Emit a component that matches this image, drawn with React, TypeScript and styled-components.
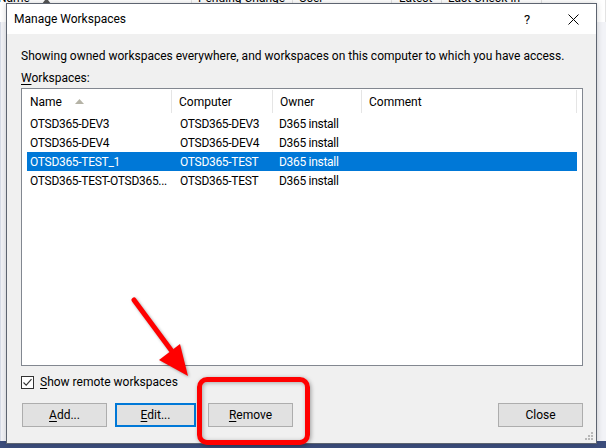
import React from "react";
import styled, { createGlobalStyle } from "styled-components";

const FONT = `Roboto, "Liberation Sans", Arial, sans-serif`;

const GlobalStyle = createGlobalStyle`
  html, body { margin: 0; padding: 0; }
  body {
    width: 606px;
    height: 448px;
    overflow: hidden;
    font-family: ${FONT};
    font-size: 12px;
    color: #000;
  }
  #root { width: 606px; height: 448px; }
`;

const Desktop = styled.div`
  position: relative;
  width: 606px;
  height: 448px;
  overflow: hidden;
  background: #f3f4f8;
`;

/* ---------- window behind the dialog ---------- */
const BackWindow = styled.div`
  width: 100%;
  height: 100%;
  display: flex;
  flex-direction: column;
`;

const BackHeader = styled.div`
  height: 22px;
  display: flex;
  background: #fff;
  overflow: hidden;
`;

const BackCell = styled.div<{ $w?: number; $pad: number }>`
  ${(p) => (p.$w ? `width: ${p.$w}px; flex: none;` : "flex: 1;")}
  box-sizing: border-box;
  padding-left: ${(p) => p.$pad}px;
  border-right: 1px solid #e3e3e3;
  display: flex;
  align-items: flex-start;
  gap: 12px;
  white-space: nowrap;
  overflow: hidden;
`;

const BackText = styled.span`
  line-height: 16px;
  margin-top: -10px;
`;

const BackSort = styled.svg`
  margin-top: -4px;
  flex: none;
`;

const BackBody = styled.div`
  flex: 1;
  background: #f2f3f7;
  border-left: 1px solid #d6dbe6;
`;

const BackFooter = styled.div`
  height: 7px;
  background: #3c4d7c;
`;

/* ---------- dialog ---------- */
const Dialog = styled.div`
  position: absolute;
  left: 6px;
  top: 3px;
  width: 591px;
  height: 441px;
  box-sizing: border-box;
  border: 1px solid #5d6470;
  background: #f0f0f0;
  display: flex;
  flex-direction: column;
  box-shadow: 0 0 6px rgba(0, 0, 0, 0.18);
`;

const TitleBar = styled.div`
  height: 30px;
  flex: none;
  background: #fff;
  display: flex;
  align-items: center;
  padding-left: 7px;
`;

const Title = styled.div`
  flex: 1;
  line-height: 16px;
`;

const CaptionButton = styled.div`
  width: 46px;
  height: 30px;
  display: flex;
  align-items: center;
  justify-content: center;
  font-size: 13px;
`;

const Body = styled.div`
  flex: 1;
  display: flex;
  flex-direction: column;
  padding: 14px 13px 16px 14px;
  min-height: 0;
`;

const Text = styled.div<{ $mt?: number }>`
  line-height: 16px;
  margin-top: ${(p) => p.$mt ?? 0}px;
  white-space: nowrap;
`;

const U = styled.span`
  text-decoration: underline;
  text-decoration-thickness: 1px;
  text-underline-offset: 2px;
`;

const ListBox = styled.div`
  margin-top: 2px;
  flex: 1;
  min-height: 0;
  border: 1px solid #828790;
  background: #fff;
  display: flex;
  flex-direction: column;
`;

const HeaderRow = styled.div`
  height: 25px;
  flex: none;
  display: grid;
  grid-template-columns: 150px 101px 89px 215px;
  align-items: center;
`;

const HeaderCell = styled.div<{ $pad: number }>`
  height: 23px;
  box-sizing: border-box;
  padding-left: ${(p) => p.$pad}px;
  border-right: 1px solid #e5e5e5;
  display: flex;
  align-items: center;
  gap: 13px;
  white-space: nowrap;
`;

const Rows = styled.div`
  display: flex;
  flex-direction: column;
  padding-left: 5px;
`;

const Row = styled.div<{ $selected?: boolean }>`
  height: 19px;
  width: 550px;
  display: grid;
  grid-template-columns: 145px 101px 89px 215px;
  align-items: center;
  background: ${(p) => (p.$selected ? "#0078d7" : "transparent")};
  color: ${(p) => (p.$selected ? "#fff" : "#000")};
`;

const Cell = styled.div<{ $pad: number }>`
  padding-left: ${(p) => p.$pad}px;
  white-space: nowrap;
  overflow: hidden;
  line-height: 16px;
  letter-spacing: -0.3px;
`;

const CheckRow = styled.div`
  margin-top: 8px;
  height: 16px;
  display: flex;
  align-items: center;
  gap: 6px;
`;

const CheckBox = styled.div`
  width: 13px;
  height: 13px;
  box-sizing: border-box;
  border: 1px solid #333;
  background: #fff;
  display: flex;
  align-items: center;
  justify-content: center;
`;

const ButtonRow = styled.div`
  margin-top: 13px;
  height: 24px;
  display: flex;
  align-items: stretch;
`;

const Button = styled.div<{ $w: number; $ml: number; $default?: boolean; $push?: boolean }>`
  width: ${(p) => p.$w}px;
  margin-left: ${(p) => (p.$push ? "auto" : `${p.$ml}px`)};
  box-sizing: border-box;
  background: #e1e1e1;
  border: 1px solid ${(p) => (p.$default ? "#0078d7" : "#adadad")};
  box-shadow: ${(p) => (p.$default ? "inset 0 0 0 1px #0078d7" : "none")};
  display: flex;
  align-items: center;
  justify-content: center;
  line-height: 16px;
`;

const Grip = styled.svg`
  position: absolute;
  right: 2px;
  bottom: 2px;
`;

/* ---------- annotations ---------- */
const Highlight = styled.div`
  position: absolute;
  left: 197px;
  top: 377px;
  width: 113px;
  height: 68px;
  box-sizing: border-box;
  border: 5px solid #ff0000;
  border-radius: 10px;
  box-shadow: 1px 1px 4px rgba(0, 0, 0, 0.35), inset 1px 1px 4px rgba(0, 0, 0, 0.3);
  pointer-events: none;
`;

const ArrowSvg = styled.svg`
  position: absolute;
  left: 0;
  top: 0;
  pointer-events: none;
  filter: drop-shadow(1px 1px 1.5px rgba(0, 0, 0, 0.35));
`;

type Ws = { name: string; computer: string; owner: string; selected?: boolean };

const workspaces: Ws[] = [
  { name: "OTSD365-DEV3", computer: "OTSD365-DEV3", owner: "D365 install" },
  { name: "OTSD365-DEV4", computer: "OTSD365-DEV4", owner: "D365 install" },
  { name: "OTSD365-TEST_1", computer: "OTSD365-TEST", owner: "D365 install", selected: true },
  { name: "OTSD365-TEST-OTSD365...", computer: "OTSD365-TEST", owner: "D365 install" },
];

const SortUp = ({ color }: { color: string }) => (
  <svg width="9" height="5" viewBox="0 0 9 5">
    <polygon points="0,5 4.5,0 9,5" fill={color} />
  </svg>
);

export default function App() {
  return (
    <>
      <GlobalStyle />
      <Desktop>
        <BackWindow>
          <BackHeader>
            <BackCell $w={192} $pad={0}>
              <BackText style={{ marginLeft: -2 }}>Name</BackText>
              <BackSort width="9" height="8" viewBox="0 0 9 8">
                <polygon points="0,8 4.5,2 9,8" fill="#555" />
              </BackSort>
            </BackCell>
            <BackCell $w={101} $pad={6}>
              <BackText>Pending Change</BackText>
            </BackCell>
            <BackCell $w={99} $pad={6}>
              <BackText>User</BackText>
            </BackCell>
            <BackCell $w={50} $pad={7}>
              <BackText>Latest</BackText>
            </BackCell>
            <BackCell $w={100} $pad={6}>
              <BackText>Last Check-in</BackText>
            </BackCell>
            <BackCell $pad={6} />
          </BackHeader>
          <BackBody />
          <BackFooter />
        </BackWindow>

        <Dialog>
          <TitleBar>
            <Title>Manage Workspaces</Title>
            <CaptionButton>?</CaptionButton>
            <CaptionButton>
              <svg width="11" height="11" viewBox="0 0 11 11">
                <path d="M0.5 0.5 L10.5 10.5 M10.5 0.5 L0.5 10.5" stroke="#000" strokeWidth="1" />
              </svg>
            </CaptionButton>
          </TitleBar>
          <Body>
            <Text>
              Showing owned workspaces everywhere, and workspaces on this computer to which you have access.
            </Text>
            <Text $mt={6}>
              <U>W</U>orkspaces:
            </Text>
            <ListBox>
              <HeaderRow>
                <HeaderCell $pad={8}>
                  Name
                  <SortUp color="#b5b3a6" />
                </HeaderCell>
                <HeaderCell $pad={7}>Computer</HeaderCell>
                <HeaderCell $pad={7}>Owner</HeaderCell>
                <HeaderCell $pad={7}>Comment</HeaderCell>
              </HeaderRow>
              <Rows>
                {workspaces.map((w) => (
                  <Row key={w.name} $selected={w.selected}>
                    <Cell $pad={3}>{w.name}</Cell>
                    <Cell $pad={8}>{w.computer}</Cell>
                    <Cell $pad={6}>{w.owner}</Cell>
                    <Cell $pad={7}></Cell>
                  </Row>
                ))}
              </Rows>
            </ListBox>
            <CheckRow>
              <CheckBox>
                <svg width="11" height="11" viewBox="0 0 11 11">
                  <path d="M1.5 5.5 L4.2 8.2 L9.5 2.2" stroke="#333" strokeWidth="1.1" fill="none" />
                </svg>
              </CheckBox>
              <span>
                <U>S</U>how remote workspaces
              </span>
            </CheckRow>
            <ButtonRow>
              <Button $w={85} $ml={1}>
                <span>
                  <U>A</U>dd...
                </span>
              </Button>
              <Button $w={81} $ml={8} $default>
                <span>
                  <U>E</U>dit...
                </span>
              </Button>
              <Button $w={85} $ml={12}>
                <span>
                  <U>R</U>emove
                </span>
              </Button>
              <Button $w={85} $ml={0} $push>
                Close
              </Button>
            </ButtonRow>
          </Body>
          <Grip width="9" height="9" viewBox="0 0 9 9">
            {[
              [6, 0],
              [3, 3],
              [6, 3],
              [0, 6],
              [3, 6],
              [6, 6],
            ].map(([x, y]) => (
              <rect key={`${x}-${y}`} x={x} y={y} width="2" height="2" fill="#b8b8b8" />
            ))}
          </Grip>
        </Dialog>

        <Highlight />
        <ArrowSvg width="606" height="448" viewBox="0 0 606 448">
          <line x1="134" y1="300" x2="171" y2="350" stroke="#ff0000" strokeWidth="5" strokeLinecap="round" />
          <polygon points="188,376 159,360 180,344" fill="#ff0000" />
        </ArrowSvg>
      </Desktop>
    </>
  );
}
